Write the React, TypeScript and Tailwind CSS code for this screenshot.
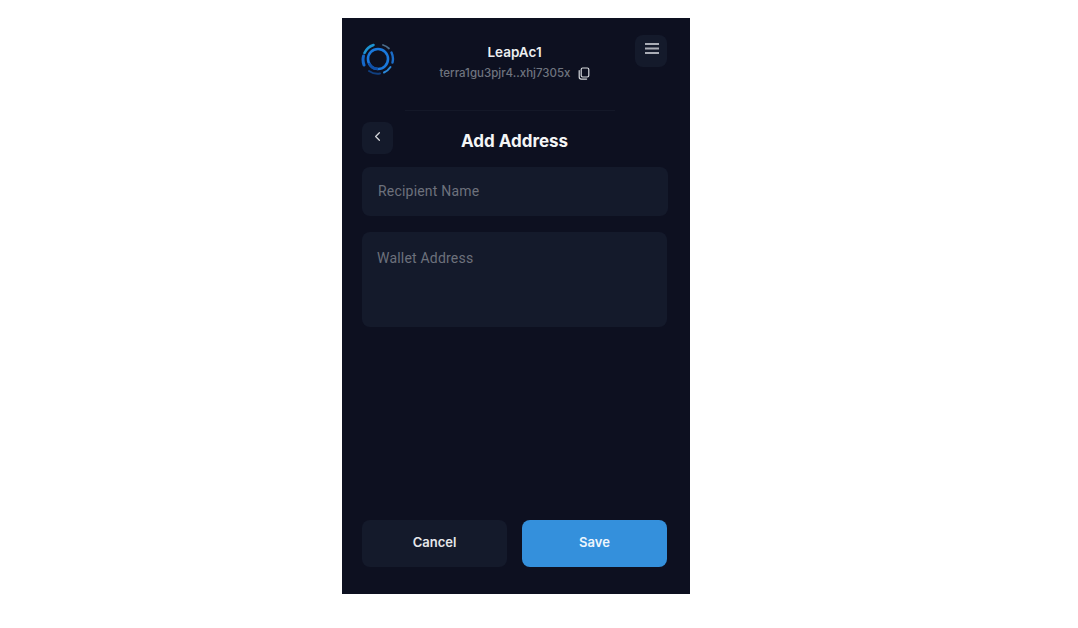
import { ChevronLeft } from 'lucide-react';

function Logo() {
  return (
    <svg width="34" height="38" viewBox="0 0 34 38" fill="none">
      <circle cx="17" cy="19" r="10" stroke="#1a78dc" strokeWidth="2.6" />
      <path d="M8 23a10 10 0 0 0 9 6" stroke="#0f4fa8" strokeWidth="2.6" />
      <path d="M3 25a15 15 0 0 1-.5-9" stroke="#1668c8" strokeWidth="3" strokeLinecap="round" />
      <path d="M3.5 13a15 15 0 0 1 9-8" stroke="#1c93d2" strokeWidth="2.6" strokeLinecap="round" />
      <path d="M22 5a15 15 0 0 1 6 3.5" stroke="#4c6d8c" strokeWidth="1.8" strokeLinecap="round" />
      <path d="M30.5 12.5a15 15 0 0 1 1 10" stroke="#1b6dc8" strokeWidth="2.4" strokeLinecap="round" />
      <path d="M29.5 27a15 15 0 0 1-6.5 5.5" stroke="#2a87d8" strokeWidth="2" strokeLinecap="round" />
      <path d="M8 31a15 15 0 0 0 11 2.5" stroke="#103f80" strokeWidth="2" strokeLinecap="round" />
    </svg>
  );
}

function CopyIcon() {
  return (
    <svg width="12" height="13" viewBox="0 0 12 13" fill="none" stroke="#d6d8dc" strokeWidth="1.2">
      <rect x="3.2" y="1" width="7.6" height="9" rx="1.4" />
      <path d="M1.2 3.5v6.6a2 2 0 0 0 2 2h5.4" strokeLinecap="round" />
    </svg>
  );
}

function MenuIcon() {
  return (
    <svg width="14" height="12" viewBox="0 0 14 12" fill="none" stroke="#a9acb5" strokeWidth="2">
      <path d="M0 1h14M0 5.5h14M0 10h14" />
    </svg>
  );
}

export default function App() {
  return (
    <div className="min-h-screen bg-white pt-[18px] pl-[342px]">
      <div className="flex h-[576px] w-[348px] flex-col bg-[#0d1020] pl-5 pr-[23px] pb-[27px] font-['Inter',sans-serif]">
        {/* header */}
        <div className="relative h-[93px] shrink-0">
          <div className="absolute left-[-1px] top-[22px]">
            <Logo />
          </div>
          <div className="flex flex-col items-center pt-[24px]">
            <div className="text-[13.5px] leading-5 font-semibold text-[#eceef0]">LeapAc1</div>
            <div className="mt-[1px] flex items-center gap-[7px]">
              <span className="text-[11.5px] leading-5 font-medium text-[#6f747f]">terra1gu3pjr4..xhj7305x</span>
              <CopyIcon />
            </div>
          </div>
          <button className="absolute right-0 top-[17px] flex h-8 w-8 items-center justify-center rounded-lg bg-[#141a2b] pb-[5px] pl-px">
            <MenuIcon />
          </button>
          <div className="absolute bottom-0 left-[43px] h-px w-[210px] bg-[#141828]" />
        </div>

        {/* title */}
        <div className="relative flex h-[56px] shrink-0 items-start justify-center pt-[18px]">
          <button className="absolute left-0 top-[11px] flex h-8 w-[31px] items-center justify-center rounded-lg bg-[#141a2b] text-[#d5d7db]">
            <ChevronLeft size={15} strokeWidth={2} className="-mt-1" />
          </button>
          <h1 className="text-[17px] leading-6 font-bold text-[#f4f5f6]">Add Address</h1>
        </div>

        {/* form */}
        <div className="mr-[-1px] flex h-[49px] shrink-0 items-center rounded-lg bg-[#141a2b] px-4 font-['Roboto',sans-serif] text-[14px] tracking-[0.2px] text-[#6d717c]">
          Recipient Name
        </div>
        <div className="mt-4 h-[95px] shrink-0 rounded-lg bg-[#141a2b] px-[15px] pt-4 font-['Roboto',sans-serif] text-[14px] leading-5 tracking-[0.2px] text-[#6d717c]">
          Wallet Address
        </div>

        {/* actions */}
        <div className="mt-auto flex gap-[15px]">
          <button className="h-[47px] flex-1 rounded-lg bg-[#141a2b] pb-px text-[13px] font-semibold text-[#e6e7ea]">Cancel</button>
          <button className="h-[47px] flex-1 rounded-lg bg-[#3490dc] pb-px text-[13px] font-semibold text-[#eef6fd]">Save</button>
        </div>
      </div>
    </div>
  );
}
